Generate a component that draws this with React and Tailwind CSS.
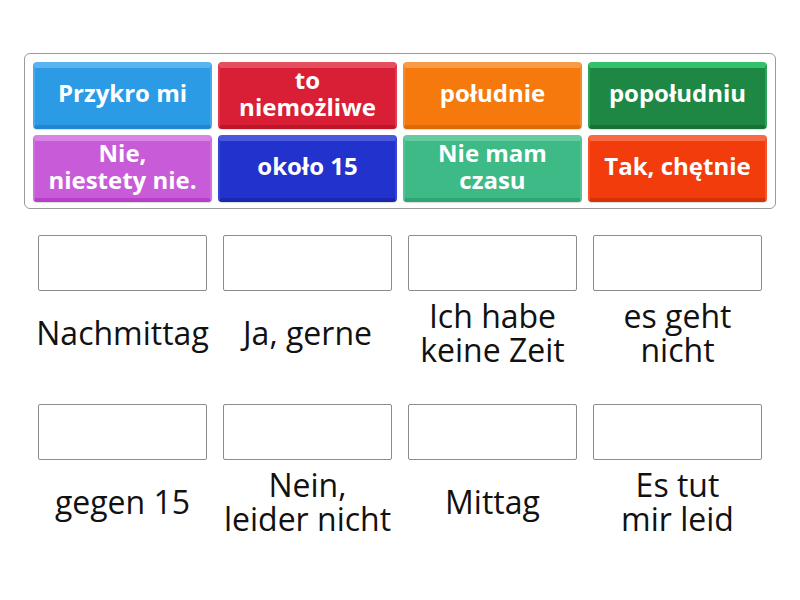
import React from "react";

const tiles = [
  { text: "Przykro mi", cls: "bg-[#2b9be6] border-t-[#5ab4ef] border-x-[#45aaeb] border-b-[#1f86cf]" },
  { text: "to niemożliwe", cls: "bg-[#d81f35] border-t-[#e5505f] border-x-[#df3a4b] border-b-[#bd1629]", lines: ["to", "niemożliwe"] },
  { text: "południe", cls: "bg-[#f5790d] border-t-[#f99a48] border-x-[#f78a2c] border-b-[#de6a05]" },
  { text: "popołudniu", cls: "bg-[#1e8744] border-t-[#33c16a] border-x-[#2aa558] border-b-[#177238]" },
  { text: "Nie, niesteety", cls: "bg-[#c85cd8] border-t-[#d884e4] border-x-[#d070de] border-b-[#b83fc9]", lines: ["Nie,", "niestety nie."] },
  { text: "około 15", cls: "bg-[#2232cc] border-t-[#4a57dc] border-x-[#3544d4] border-b-[#1a27b0]" },
  { text: "Nie mam czasu", cls: "bg-[#3dba86] border-t-[#65cba0] border-x-[#52c394] border-b-[#2fa474]", lines: ["Nie mam", "czasu"] },
  { text: "Tak, chętnie", cls: "bg-[#f23c0b] border-t-[#f76a44] border-x-[#f45427] border-b-[#d63205]" },
];

const rows = [
  [["Nachmittag"], ["Ja, gerne"], ["Ich habe", "keine Zeit"], ["es geht", "nicht"]],
  [["gegen 15"], ["Nein,", "leider nicht"], ["Mittag"], ["Es tut", "mir leid"]],
];

function Tile({ tile }) {
  const lines = tile.lines || [tile.text];
  return (
    <div
      className={`h-[67px] rounded-[4px] border-t-[6px] border-x-[2px] border-b-[4px] flex items-center justify-center text-white font-bold text-[24px] leading-[27px] text-center shadow-[0_1px_1px_rgba(0,0,0,0.15)] ${tile.cls}`}
    >
      <div className="flex flex-col items-center -translate-y-[4px]">
        {lines.map((l) => (
          <span key={l}>{l}</span>
        ))}
      </div>
    </div>
  );
}

export default function App() {
  return (
    <div className="w-[800px] h-[600px] bg-white" style={{ fontFamily: '"Open Sans", sans-serif' }}>
      <div className="pt-[53px] px-[24px]">
        <div className="border border-[#9a9a9a] rounded-[6px] px-[8px] pt-[8px] pb-[6px] grid grid-cols-4 gap-x-[6px] gap-y-[6px]">
          {tiles.map((t) => (
            <Tile key={t.text} tile={t} />
          ))}
        </div>
      </div>
      <div className="pl-[38px] pt-[26px]">
        {rows.map((row, i) => (
          <div key={i} className="flex gap-[16px] mb-[29px]">
            {row.map((label, j) => (
              <div key={j} className="w-[169px] flex flex-col">
                <div className="h-[56px] border border-[#8c8c8c] rounded-[2px] bg-white" />
                <div className="h-[84px] flex flex-col items-center justify-center text-[#111] text-[32px] leading-[34px] text-center whitespace-nowrap">
                  {label.map((l) => (
                    <span key={l}>{l}</span>
                  ))}
                </div>
              </div>
            ))}
          </div>
        ))}
      </div>
    </div>
  );
}
